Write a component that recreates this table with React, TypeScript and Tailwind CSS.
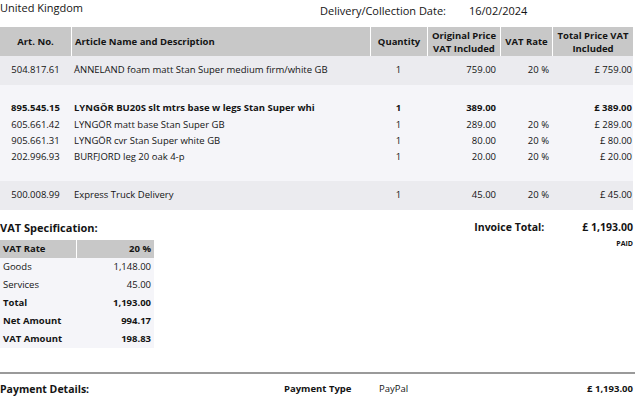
import React from "react";

const cols = "grid grid-cols-[71px_299px_57px_73px_52px_81px]";

type Row = { no: string; name: string; qty: string; price: string; vat: string; total: string; bold?: boolean };

function Line({ r, h }: { r: Row; h: string }) {
  const b = r.bold ? "font-bold" : "";
  return (
    <div className={`${cols} ${h} items-center ${b}`}>
      <div className="text-center">{r.no}</div>
      <div className="pl-[3px] whitespace-nowrap overflow-hidden">{r.name}</div>
      <div className="text-center">{r.qty}</div>
      <div className="text-right pr-[4px]">{r.price}</div>
      <div className="text-right pr-[3px]">{r.vat}</div>
      <div className="text-right pr-[1px]">{r.total}</div>
    </div>
  );
}

export default function App() {
  return (
    <div className="w-[640px] h-[404px] bg-white text-[#141414] overflow-hidden relative" style={{ fontFamily: '"Open Sans", "Noto Sans", sans-serif' }}>
      <div className="flex h-[27px] text-[11px] leading-[16px]">
        <div className="w-[320px]">United Kingdom</div>
        <div className="w-[149px] pt-[3px]">Delivery/Collection Date:</div>
        <div className="pt-[3px]">16/02/2024</div>
      </div>
      <div className="w-[633px] text-[9.5px]">
        <div className={`${cols} h-[29px] bg-[#c8c8c8] font-bold leading-[13px] items-stretch`}>
          <div className="flex items-center justify-center">Art. No.</div>
          <div className="flex items-center pl-[3px] border-l border-white">Article Name and Description</div>
          <div className="flex items-center justify-center border-l border-white">Quantity</div>
          <div className="flex items-center justify-center text-center border-l border-white">Original Price<br />VAT Included</div>
          <div className="flex items-center justify-center border-l border-white">VAT Rate</div>
          <div className="flex items-center justify-center text-center border-l border-white">Total Price VAT<br />Included</div>
        </div>
        <div className="bg-[#ebebef]">
          <Line h="h-[29px]" r={{ no: "504.817.61", name: "ÅNNELAND foam matt Stan Super medium firm/white GB", qty: "1", price: "759.00", vat: "20 %", total: "£ 759.00" }} />
        </div>
        <div className="bg-[#f5f5f9] pt-[15px] h-[96px]">
          <Line h="h-[17px]" r={{ no: "895.545.15", name: "LYNGÖR BU20S slt mtrs base w legs Stan Super whi", qty: "1", price: "389.00", vat: "", total: "£ 389.00", bold: true }} />
          <Line h="h-[16px]" r={{ no: "605.661.42", name: "LYNGÖR matt base Stan Super GB", qty: "1", price: "289.00", vat: "20 %", total: "£ 289.00" }} />
          <Line h="h-[16px]" r={{ no: "905.661.31", name: "LYNGÖR cvr Stan Super white GB", qty: "1", price: "80.00", vat: "20 %", total: "£ 80.00" }} />
          <Line h="h-[16px]" r={{ no: "202.996.93", name: "BURFJORD leg 20 oak 4-p", qty: "1", price: "20.00", vat: "20 %", total: "£ 20.00" }} />
        </div>
        <div className="bg-[#ebebef]">
          <Line h="h-[29px]" r={{ no: "500.008.99", name: "Express Truck Delivery", qty: "1", price: "45.00", vat: "20 %", total: "£ 45.00" }} />
        </div>
      </div>
      <div className="flex w-[633px] mt-[9px]">
        <div className="w-[154px]">
          <div className="text-[11px] font-bold leading-[17px]">VAT Specification:</div>
          <div className="mt-[4px] text-[9.5px] bg-[#f5f5f9]">
            <div className="grid grid-cols-[76px_78px] h-[18px] bg-[#c8c8c8] font-bold items-center">
              <div className="pl-[3px]">VAT Rate</div>
              <div className="text-right pr-[3px] border-l border-white h-full flex items-center justify-end">20 %</div>
            </div>
            {[
              ["Goods", "1,148.00", false],
              ["Services", "45.00", false],
              ["Total", "1,193.00", true],
              ["Net Amount", "994.17", true],
              ["VAT Amount", "198.83", true],
            ].map(([a, b, bold]) => (
              <div key={a as string} className={`grid grid-cols-[76px_78px] h-[18px] items-center ${bold ? "font-bold" : ""}`}>
                <div className="pl-[3px]">{a}</div>
                <div className="text-right pr-[3px]">{b}</div>
              </div>
            ))}
          </div>
        </div>
        <div className="flex-1 flex flex-col items-end">
          <div className="flex text-[10.5px] font-bold leading-[17px]">
            <div className="w-[108px]">Invoice Total:</div>
            <div>£ 1,193.00</div>
          </div>
          <div className="text-[7px] font-bold leading-[10px] mt-[3px]">PAID</div>
        </div>
      </div>
      <div className="w-[635px] border-t-2 border-[#9a9a9a] mt-[24px]" />
      <div className="flex w-[633px] items-center mt-[7px] h-[17px]">
        <div className="w-[284px] text-[10.5px] font-bold">Payment Details:</div>
        <div className="w-[95px] text-[9.5px] font-bold">Payment Type</div>
        <div className="text-[9.5px]">PayPal</div>
        <div className="flex-1 text-right text-[9.5px] font-bold">£ 1,193.00</div>
      </div>
    </div>
  );
}
